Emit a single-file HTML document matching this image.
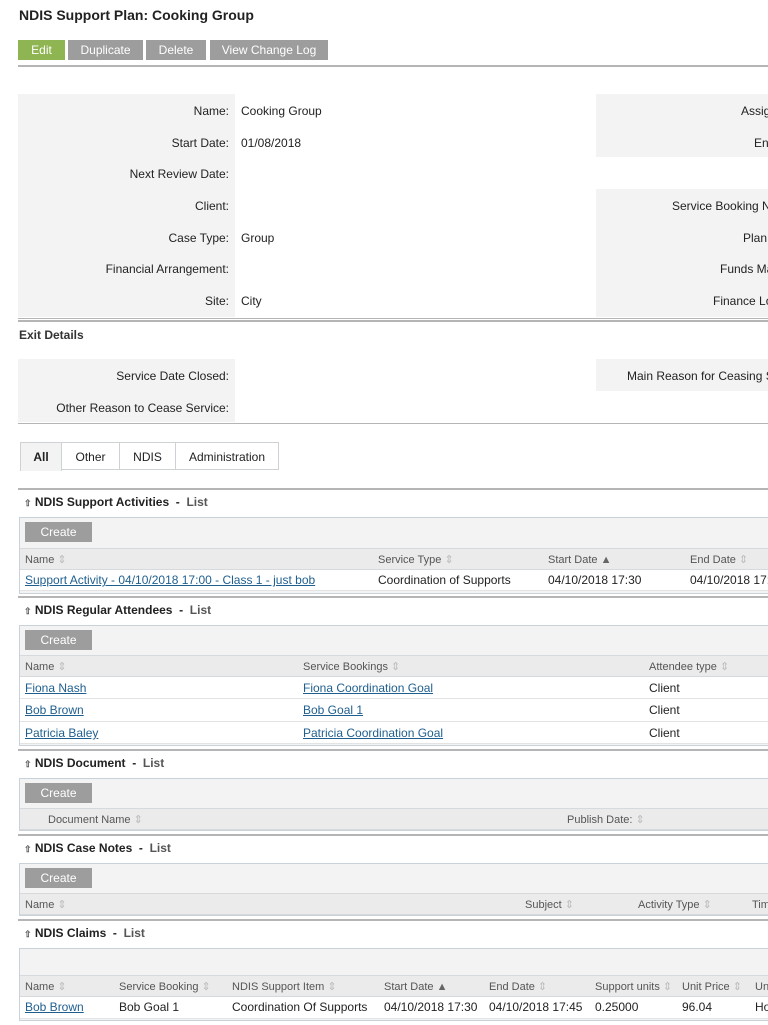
<!DOCTYPE html>
<html><head><meta charset="utf-8">
<style>
*{margin:0;padding:0;box-sizing:border-box}
html,body{width:768px;height:1025px;overflow:hidden;background:#fff;font-family:"Liberation Sans",Arial,sans-serif;font-size:12px;color:#222}
#w{position:relative;width:768px;height:1025px;overflow:hidden}
.a{position:absolute;white-space:nowrap;line-height:14px;margin-top:1px}
.r{text-align:right}
.bg{position:absolute;background:#f3f3f3}
.hl{position:absolute;left:18px;right:0;height:2px;background:#b5b5b5}
.btn{position:absolute;height:20px;line-height:20px;color:#fff;text-align:center;font-size:12px;background:#9d9d9d}
.box{position:absolute;left:19px;right:0;border:1px solid #c8d2d8;border-right:none;background:#f3f3f3}
.hdr{position:absolute;left:20px;right:0;background:#ebebeb;border-top:1px solid #d6dadd;border-bottom:1px solid #d6dadd}
.row{position:absolute;left:20px;right:0;background:#fff;border-bottom:1px solid #e3e3e3}
.h{color:#555;font-size:11px}
.h i{font-style:normal;color:#bbb}
.lk{color:#1f5f8f;text-decoration:underline}
.sec{font-weight:bold}
.sec .l{color:#555}
.sec s{text-decoration:none;font-size:9px;color:#555}
.t{position:absolute;top:442px;height:28px;line-height:28px;border:1px solid #ccd2d6;text-align:center;background:#fff}
</style></head><body><div id="w">
<div class="a sec" style="left:19px;top:6px;font-size:14px;line-height:16px">NDIS Support Plan: Cooking Group</div>
<div class="btn" style="left:18px;top:40px;width:47px;background:#8fb552">Edit</div>
<div class="btn" style="left:68px;top:40px;width:75px">Duplicate</div>
<div class="btn" style="left:146px;top:40px;width:60px">Delete</div>
<div class="btn" style="left:210px;top:40px;width:118px">View Change Log</div>
<div class="hl" style="top:65px"></div>

<div class="bg" style="left:18px;top:94px;width:217px;height:223px"></div>
<div class="bg" style="left:596px;top:94px;width:172px;height:63px"></div>
<div class="bg" style="left:596px;top:189px;width:172px;height:128px"></div>
<div class="a r" style="right:539px;top:103px">Name:</div>
<div class="a r" style="right:539px;top:135px">Start Date:</div>
<div class="a r" style="right:539px;top:166px">Next Review Date:</div>
<div class="a r" style="right:539px;top:198px">Client:</div>
<div class="a r" style="right:539px;top:230px">Case Type:</div>
<div class="a r" style="right:539px;top:261px">Financial Arrangement:</div>
<div class="a r" style="right:539px;top:293px">Site:</div>
<div class="a" style="left:241px;top:103px">Cooking Group</div>
<div class="a" style="left:241px;top:135px">01/08/2018</div>
<div class="a" style="left:241px;top:230px">Group</div>
<div class="a" style="left:241px;top:293px">City</div>
<div class="a" style="left:741px;top:103px">Assigned To:</div>
<div class="a" style="left:754px;top:135px">End Date:</div>
<div class="a" style="left:672px;top:198px">Service Booking Number:</div>
<div class="a" style="left:743px;top:230px">Plan Start:</div>
<div class="a" style="left:720px;top:261px">Funds Managed:</div>
<div class="a" style="left:713px;top:293px">Finance Location:</div>
<div class="hl" style="top:318px;height:1px"></div>
<div class="hl" style="top:320px"></div>

<div class="a sec" style="left:19px;top:327px;color:#333">Exit Details</div>
<div class="bg" style="left:18px;top:359px;width:217px;height:63px"></div>
<div class="bg" style="left:596px;top:359px;width:172px;height:32px"></div>
<div class="a r" style="right:539px;top:368px">Service Date Closed:</div>
<div class="a r" style="right:539px;top:400px">Other Reason to Cease Service:</div>
<div class="a" style="left:627px;top:368px">Main Reason for Ceasing Service:</div>
<div class="hl" style="top:423px;height:1px"></div>

<div class="t" style="left:20px;width:42px;background:#f3f3f3;border-bottom:none;font-weight:bold;height:29px">All</div>
<div class="t" style="left:61px;width:59px">Other</div>
<div class="t" style="left:119px;width:57px">NDIS</div>
<div class="t" style="left:175px;width:104px">Administration</div>

<div class="hl" style="top:488px"></div>
<div class="a sec" style="left:24px;top:494px"><s>&#8679;</s> NDIS Support Activities &nbsp;- &nbsp;<span class="l">List</span></div>
<div class="box" style="top:517px;height:77px"></div>
<div class="btn" style="left:25px;top:522px;width:67px">Create</div>
<div class="hdr" style="top:548px;height:22px"></div>
<div class="row" style="top:570px;height:21px"></div>
<div class="a h" style="left:25px;top:552px">Name <i>&#8661;</i></div>
<div class="a h" style="left:378px;top:552px">Service Type <i>&#8661;</i></div>
<div class="a h" style="left:548px;top:552px">Start Date <i style="color:#666">&#9650;</i></div>
<div class="a h" style="left:690px;top:552px">End Date <i>&#8661;</i></div>
<div class="a lk" style="left:25px;top:572px">Support Activity - 04/10/2018 17:00 - Class 1 - just bob</div>
<div class="a" style="left:378px;top:572px">Coordination of Supports</div>
<div class="a" style="left:548px;top:572px">04/10/2018 17:30</div>
<div class="a" style="left:690px;top:572px">04/10/2018 17:45</div>

<div class="hl" style="top:596px"></div>
<div class="a sec" style="left:24px;top:602px"><s>&#8679;</s> NDIS Regular Attendees &nbsp;- &nbsp;<span class="l">List</span></div>
<div class="box" style="top:625px;height:121px"></div>
<div class="btn" style="left:25px;top:630px;width:67px">Create</div>
<div class="hdr" style="top:655px;height:22px"></div>
<div class="row" style="top:677px;height:22px"></div>
<div class="row" style="top:699px;height:23px"></div>
<div class="row" style="top:722px;height:22px"></div>
<div class="a h" style="left:25px;top:659px">Name <i>&#8661;</i></div>
<div class="a h" style="left:303px;top:659px">Service Bookings <i>&#8661;</i></div>
<div class="a h" style="left:649px;top:659px">Attendee type <i>&#8661;</i></div>
<div class="a lk" style="left:25px;top:680px">Fiona Nash</div>
<div class="a lk" style="left:303px;top:680px">Fiona Coordination Goal</div>
<div class="a" style="left:649px;top:680px">Client</div>
<div class="a lk" style="left:25px;top:702px">Bob Brown</div>
<div class="a lk" style="left:303px;top:702px">Bob Goal 1</div>
<div class="a" style="left:649px;top:702px">Client</div>
<div class="a lk" style="left:25px;top:725px">Patricia Baley</div>
<div class="a lk" style="left:303px;top:725px">Patricia Coordination Goal</div>
<div class="a" style="left:649px;top:725px">Client</div>

<div class="hl" style="top:749px"></div>
<div class="a sec" style="left:24px;top:755px"><s>&#8679;</s> NDIS Document &nbsp;- &nbsp;<span class="l">List</span></div>
<div class="box" style="top:778px;height:53px"></div>
<div class="btn" style="left:25px;top:783px;width:67px">Create</div>
<div class="hdr" style="top:808px;height:22px"></div>
<div class="a h" style="left:48px;top:812px">Document Name <i>&#8661;</i></div>
<div class="a h" style="left:567px;top:812px">Publish Date: <i>&#8661;</i></div>

<div class="hl" style="top:834px"></div>
<div class="a sec" style="left:24px;top:840px"><s>&#8679;</s> NDIS Case Notes &nbsp;- &nbsp;<span class="l">List</span></div>
<div class="box" style="top:863px;height:53px"></div>
<div class="btn" style="left:25px;top:868px;width:67px">Create</div>
<div class="hdr" style="top:893px;height:22px"></div>
<div class="a h" style="left:25px;top:897px">Name <i>&#8661;</i></div>
<div class="a h" style="left:525px;top:897px">Subject <i>&#8661;</i></div>
<div class="a h" style="left:638px;top:897px">Activity Type <i>&#8661;</i></div>
<div class="a h" style="left:752px;top:897px">Time</div>

<div class="hl" style="top:919px"></div>
<div class="a sec" style="left:24px;top:925px"><s>&#8679;</s> NDIS Claims &nbsp;- &nbsp;<span class="l">List</span></div>
<div class="box" style="top:948px;height:73px"></div>
<div class="hdr" style="top:975px;height:22px"></div>
<div class="row" style="top:997px;height:22px"></div>
<div class="a h" style="left:25px;top:979px">Name <i>&#8661;</i></div>
<div class="a h" style="left:119px;top:979px">Service Booking <i>&#8661;</i></div>
<div class="a h" style="left:232px;top:979px">NDIS Support Item <i>&#8661;</i></div>
<div class="a h" style="left:384px;top:979px">Start Date <i style="color:#666">&#9650;</i></div>
<div class="a h" style="left:489px;top:979px">End Date <i>&#8661;</i></div>
<div class="a h" style="left:595px;top:979px">Support units <i>&#8661;</i></div>
<div class="a h" style="left:682px;top:979px">Unit Price <i>&#8661;</i></div>
<div class="a h" style="left:755px;top:979px">Unit</div>
<div class="a lk" style="left:25px;top:999px">Bob Brown</div>
<div class="a" style="left:119px;top:999px">Bob Goal 1</div>
<div class="a" style="left:232px;top:999px">Coordination Of Supports</div>
<div class="a" style="left:384px;top:999px">04/10/2018 17:30</div>
<div class="a" style="left:489px;top:999px">04/10/2018 17:45</div>
<div class="a" style="left:595px;top:999px">0.25000</div>
<div class="a" style="left:682px;top:999px">96.04</div>
<div class="a" style="left:755px;top:999px">Hour</div>
</div></body></html>
